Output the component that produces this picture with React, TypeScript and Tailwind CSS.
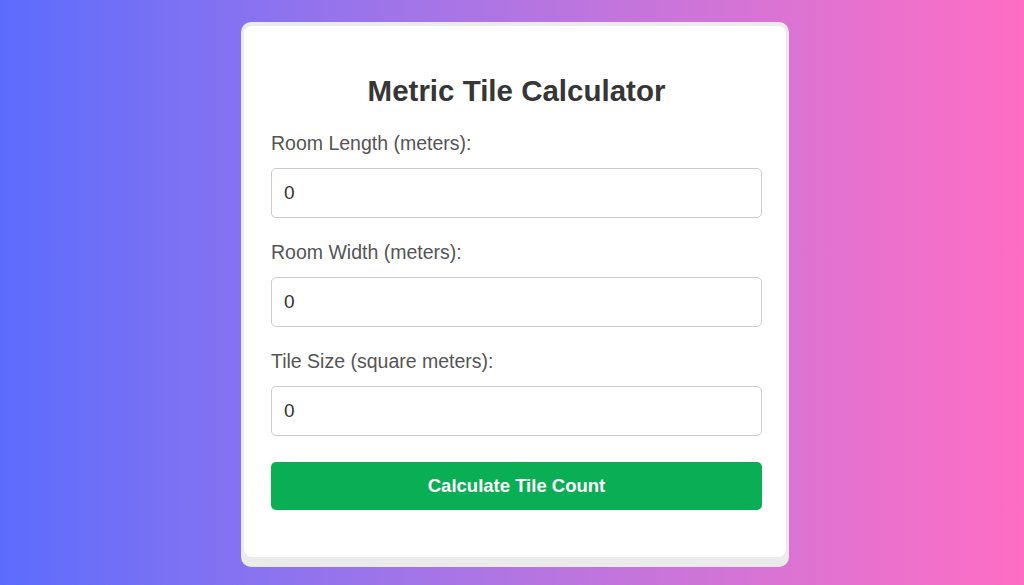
import { useState } from "react";

function Field({ label, value, onChange }: { label: string; value: string; onChange: (v: string) => void }) {
    return (
        <div className="flex flex-col">
            <label className="text-[19.5px] leading-[22px] text-[#555555]">{label}</label>
            <input
                type="number"
                value={value}
                onChange={(e) => onChange(e.target.value)}
                className="mt-[14px] h-[50px] w-full rounded-[5px] border border-[#cccccc] px-[12px] text-[19px] text-[#333333] outline-none [appearance:textfield]"
            />
        </div>
    );
}

export default function App() {
    const [length, setLength] = useState("0");
    const [width, setWidth] = useState("0");
    const [tile, setTile] = useState("0");

    return (
        <div
            className="flex h-[585px] w-full justify-center bg-linear-to-r from-[#5b6cfd] to-[#ff6dc4] pt-[22px]"
            style={{ fontFamily: '"Liberation Sans", Arial, sans-serif' }}
        >
            <div className="ml-[6px] h-[545px] w-[548px] rounded-[10px] bg-[#ebebeb] pt-[4px] pr-[3px] pb-[10px] pl-[3px]">
                <div className="h-full rounded-[8px] bg-white pt-[48px] pr-[24px] pl-[27px]">
                    <h2 className="text-center text-[29.5px] leading-[34px] font-bold text-[#363636]">
                        Metric Tile Calculator
                    </h2>
                    <div className="mt-[24px] flex flex-col gap-[23px]">
                        <Field label="Room Length (meters):" value={length} onChange={setLength} />
                        <Field label="Room Width (meters):" value={width} onChange={setWidth} />
                        <Field label="Tile Size (square meters):" value={tile} onChange={setTile} />
                    </div>
                    <button className="mt-[26px] h-[48px] w-full rounded-[5px] bg-[#0aae54] text-[18.5px] font-bold text-white">
                        Calculate Tile Count
                    </button>
                </div>
            </div>
        </div>
    );
}
